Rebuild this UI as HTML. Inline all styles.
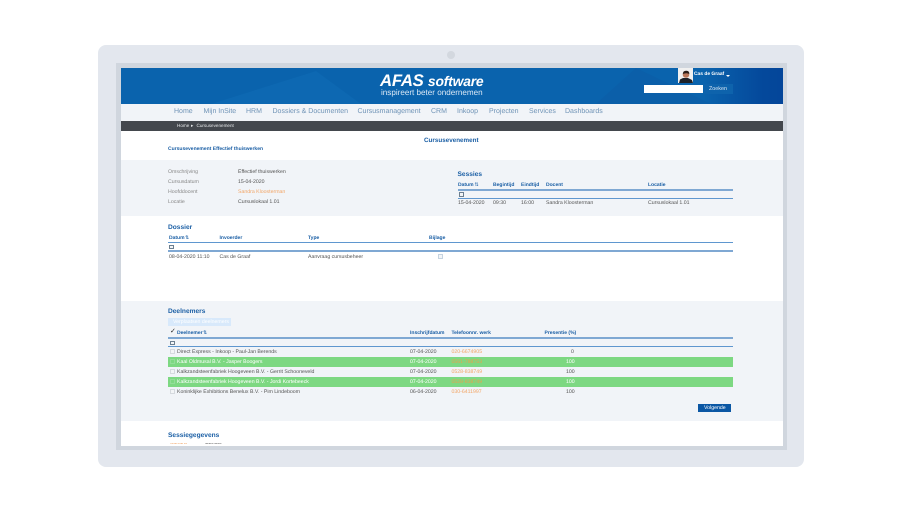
<!DOCTYPE html>
<html><head><meta charset="utf-8">
<style>
html,body{margin:0;padding:0;background:#fff;width:900px;height:514px;overflow:hidden}
body{position:relative;font-family:"Liberation Sans",sans-serif;text-rendering:geometricPrecision}
#w{position:absolute;left:0;top:0;width:900px;height:514px;filter:blur(.3px)}
.a{position:absolute}
.t{position:absolute;white-space:nowrap;font-size:5.2px;line-height:8px;color:#555}
.h{color:#1b5fa5;font-weight:bold}
.l{color:#888}
.o{color:#f2a566}
.w{color:#fff}
.n{position:absolute;white-space:nowrap;font-size:7px;line-height:12px;top:106px;color:#6f93b6}
.s{position:absolute;white-space:nowrap;font-size:6.6px;line-height:10px;font-weight:bold;color:#1b5fa5}
.line{position:absolute;background:#5f97cf}
.thick{background:#7fa8d3}
.cb{position:absolute;box-sizing:border-box;width:5px;height:5px;border:.5px solid #d5d9de;background:#f3f5f7}
.ico{position:absolute;box-sizing:border-box;width:5px;height:4.5px;border:.5px solid #6c7f90;background:#f3f5f7}
</style></head><body><div id="w">
<div class="a" style="left:98px;top:45px;width:706px;height:422px;background:#e3e7ee;border-radius:8px"></div>
<div class="a" style="left:447px;top:51px;width:8px;height:8px;border-radius:50%;background:#d3d8df"></div>
<div class="a" style="left:116px;top:63px;width:671px;height:387px;background:#d0d6de"></div>
<div class="a" style="left:121px;top:68px;width:662px;height:378px;background:#fff;overflow:hidden"></div>

<div class="a" style="left:121px;top:68px;width:662px;height:36px;overflow:hidden;background:linear-gradient(90deg,#0a63ad 0%,#0a63ad 88%,#04489b 97%,#04469a 100%)">
<svg width="662" height="36" style="position:absolute;left:0;top:0"><polygon points="90,36 195,3 240,36" fill="#1170b8" opacity=".4"/><polygon points="475,36 515,0 590,36" fill="#0c5ca6" opacity=".5"/></svg>
</div>
<div class="a" style="left:380px;top:71px;font-size:16.8px;line-height:20px;font-weight:bold;font-style:italic;color:#fff;letter-spacing:-.3px;white-space:nowrap">AFAS <span style="font-size:13.9px;letter-spacing:-.2px">software</span></div>
<div class="a" style="left:381px;top:88px;font-size:8.100px;line-height:10px;color:#dbe8f5;white-space:nowrap">inspireert beter ondernemen</div>

<div class="a" style="left:678px;top:68px;width:15px;height:15px;background:#f4f4f4;overflow:hidden">
<svg width="15" height="15"><rect width="15" height="15" fill="#f0f0f0"/><path d="M1 15 L2 11.500 L5 10 L10 10 L14 12 L15 15Z" fill="#1d2128"/><circle cx="8" cy="6.500" r="3.300" fill="#b9775a"/><path d="M4.800 6 Q5 2.500 8.500 2.800 Q11.500 3 11.300 6 Q8.500 4.500 4.800 6Z" fill="#2a1d18"/></svg>
</div>
<div class="t w" style="left:694px;top:71px;font-weight:bold;font-size:4.900px">Cas de Graaf</div>
<div class="a" style="left:725.500px;top:75px;width:0;height:0;border-left:2.200px solid transparent;border-right:2.200px solid transparent;border-top:2.200px solid #fff"></div>
<div class="a" style="left:644px;top:85px;width:59px;height:8px;background:#fff"></div>
<div class="a" style="left:704px;top:84px;width:29px;height:10px;background:#0e63ac"></div>
<div class="t" style="left:709px;top:85px;font-size:5.400px;color:#dce8f4">Zoeken</div>

<div class="a" style="left:121px;top:104px;width:662px;height:17px;background:#f1f4f8"></div>
<div class="n" style="left:174px">Home</div>
<div class="n" style="left:203.500px">Mijn InSite</div>
<div class="n" style="left:246px">HRM</div>
<div class="n" style="left:272.500px">Dossiers &amp; Documenten</div>
<div class="n" style="left:357.500px">Cursusmanagement</div>
<div class="n" style="left:431px">CRM</div>
<div class="n" style="left:457px">Inkoop</div>
<div class="n" style="left:489px">Projecten</div>
<div class="n" style="left:529px">Services</div>
<div class="n" style="left:565px">Dashboards</div>

<div class="a" style="left:121px;top:121px;width:662px;height:10px;background:#43474d"></div>
<div class="t" style="left:177px;top:121.500px;color:#e6e8ea;font-size:4.600px">Home</div>
<div class="t" style="left:191px;top:121.500px;color:#e6e8ea;font-size:4.600px">&#9656;</div>
<div class="t" style="left:196.500px;top:121.500px;color:#e6e8ea;font-size:4.600px">Cursusevenement</div>

<div class="t h" style="left:424px;top:136.500px;font-size:6.300px">Cursusevenement</div>
<div class="t h" style="left:168px;top:145px;font-size:5px">Cursusevenement Effectief thuiswerken</div>

<div class="a" style="left:121px;top:160px;width:662px;height:56px;background:#f1f4f8"></div>
<div class="t l" style="left:168px;top:168px">Omschrijving</div>
<div class="t" style="left:238px;top:168px">Effectief thuiswerken</div>
<div class="t l" style="left:168px;top:178px">Cursusdatum</div>
<div class="t" style="left:238px;top:178px">15-04-2020</div>
<div class="t l" style="left:168px;top:188px">Hoofddocent</div>
<div class="t o" style="left:238px;top:188px">Sandra Kloosterman</div>
<div class="t l" style="left:168px;top:198px">Locatie</div>
<div class="t" style="left:238px;top:198px">Cursuslokaal 1.01</div>

<div class="s" style="left:457.500px;top:170px">Sessies</div>
<div class="t h" style="left:458px;top:180.500px;font-size:5px">Datum</div>
<div class="t h" style="left:474.500px;top:180.500px;font-size:5px;font-weight:normal">&#8645;</div>
<div class="t h" style="left:493px;top:180.500px;font-size:5px">Begintijd</div>
<div class="t h" style="left:521px;top:180.500px;font-size:5px">Eindtijd</div>
<div class="t h" style="left:546px;top:180.500px;font-size:5px">Docent</div>
<div class="t h" style="left:648px;top:180.500px;font-size:5px">Locatie</div>
<div class="line thick" style="left:458px;top:189px;width:275px;height:2px"></div>
<div class="ico" style="left:459px;top:192px"></div>
<div class="line" style="left:458px;top:198px;width:275px;height:1px"></div>
<div class="t" style="left:458px;top:199px">15-04-2020</div>
<div class="t" style="left:493px;top:199px">09:30</div>
<div class="t" style="left:521px;top:199px">16:00</div>
<div class="t" style="left:546px;top:199px">Sandra Kloosterman</div>
<div class="t" style="left:648px;top:199px">Cursuslokaal 1.01</div>

<div class="s" style="left:168px;top:222.500px">Dossier</div>
<div class="t h" style="left:169px;top:233.500px;font-size:5px">Datum</div>
<div class="t h" style="left:185px;top:233.500px;font-size:5px;font-weight:normal">&#8645;</div>
<div class="t h" style="left:219.500px;top:233.500px;font-size:5px">Invoerder</div>
<div class="t h" style="left:308px;top:233.500px;font-size:5px">Type</div>
<div class="t h" style="left:429px;top:233.500px;font-size:5px">Bijlage</div>
<div class="line" style="left:168px;top:242px;width:565px;height:1px"></div>
<div class="ico" style="left:169px;top:244.500px"></div>
<div class="line thick" style="left:168px;top:250px;width:565px;height:2px"></div>
<div class="t" style="left:169px;top:252.500px">08-04-2020 11:10</div>
<div class="t" style="left:219.500px;top:252.500px">Cas de Graaf</div>
<div class="t" style="left:308px;top:252.500px">Aanvraag cursusbeheer</div>
<div class="ico" style="left:438px;top:254px;border-color:#c5d3e0"></div>

<div class="a" style="left:121px;top:301px;width:662px;height:120px;background:#f1f4f8"></div>
<div class="s" style="left:168px;top:307px">Deelnemers</div>
<div class="a" style="left:168px;top:318px;width:63px;height:8px;background:#d8e9fb"></div>
<div class="t w" style="left:173px;top:318px">Verplaatsen deelnemers</div>
<div class="t" style="left:170px;top:327.500px;font-size:7px;color:#222">&#10003;</div>
<div class="t h" style="left:177px;top:328.500px;font-size:5px">Deelnemer</div>
<div class="t h" style="left:203px;top:328.500px;font-size:5px;font-weight:normal">&#8645;</div>
<div class="t h" style="left:410px;top:328.500px;font-size:5px">Inschrijfdatum</div>
<div class="t h" style="left:451.500px;top:328.500px;font-size:5px">Telefoonnr. werk</div>
<div class="t h" style="left:544.500px;top:328.500px;font-size:5px">Presentie (%)</div>
<div class="line thick" style="left:168px;top:337px;width:565px;height:2px"></div>
<div class="ico" style="left:169.500px;top:340.500px"></div>
<div class="line" style="left:168px;top:346px;width:565px;height:1px"></div>

<div class="a" style="left:168px;top:356.500px;width:565px;height:10px;background:#7dd882"></div>
<div class="a" style="left:168px;top:376.500px;width:565px;height:10px;background:#7dd882"></div>

<div class="cb" style="left:170px;top:349px"></div>
<div class="t" style="left:177px;top:347.500px">Direct Express - Inkoop - Paul-Jan Berends</div>
<div class="t" style="left:410px;top:347.500px">07-04-2020</div>
<div class="t o" style="left:451.500px;top:347.500px">020-6674905</div>
<div class="t" style="left:571px;top:347.500px">0</div>

<div class="cb" style="left:170px;top:359px;background:#7dd882;border-color:#93de98"></div>
<div class="t w" style="left:177px;top:357.500px">Kaal Oldmusal B.V. - Jasper Boogers</div>
<div class="t w" style="left:410px;top:357.500px">07-04-2020</div>
<div class="t" style="left:451.500px;top:357.500px;color:#e8a24f">0561-788753</div>
<div class="t w" style="left:566px;top:357.500px">100</div>

<div class="cb" style="left:170px;top:369px"></div>
<div class="t" style="left:177px;top:367.500px">Kalkzandsteenfabriek Hoogeveen B.V. - Gerrit Schooneveld</div>
<div class="t" style="left:410px;top:367.500px">07-04-2020</div>
<div class="t o" style="left:451.500px;top:367.500px">0528-838749</div>
<div class="t" style="left:566px;top:367.500px">100</div>

<div class="cb" style="left:170px;top:379px;background:#7dd882;border-color:#93de98"></div>
<div class="t w" style="left:177px;top:377.500px">Kalkzandsteenfabriek Hoogeveen B.V. - Jordi Kortebeeck</div>
<div class="t w" style="left:410px;top:377.500px">07-04-2020</div>
<div class="t" style="left:451.500px;top:377.500px;color:#e8a24f">0528-838749</div>
<div class="t w" style="left:566px;top:377.500px">100</div>

<div class="cb" style="left:170px;top:389px"></div>
<div class="t" style="left:177px;top:387.500px">Koninklijke Exhibitions Benelux B.V. - Pim Lindeboom</div>
<div class="t" style="left:410px;top:387.500px">06-04-2020</div>
<div class="t o" style="left:451.500px;top:387.500px">030-6411997</div>
<div class="t" style="left:566px;top:387.500px">100</div>

<div class="a" style="left:698px;top:404px;width:33px;height:8px;background:#0b57a4"></div>
<div class="t w" style="left:704px;top:404px">Volgende</div>

<div class="s" style="left:168px;top:431px">Sessiegegevens</div>
<div class="a" style="left:121px;top:443px;width:662px;height:3px;overflow:hidden">
<div class="t o" style="left:49px;top:-4px">Sandra</div>
<div class="t" style="left:84px;top:-4px">Cursus</div>
</div>
</div></body></html>
